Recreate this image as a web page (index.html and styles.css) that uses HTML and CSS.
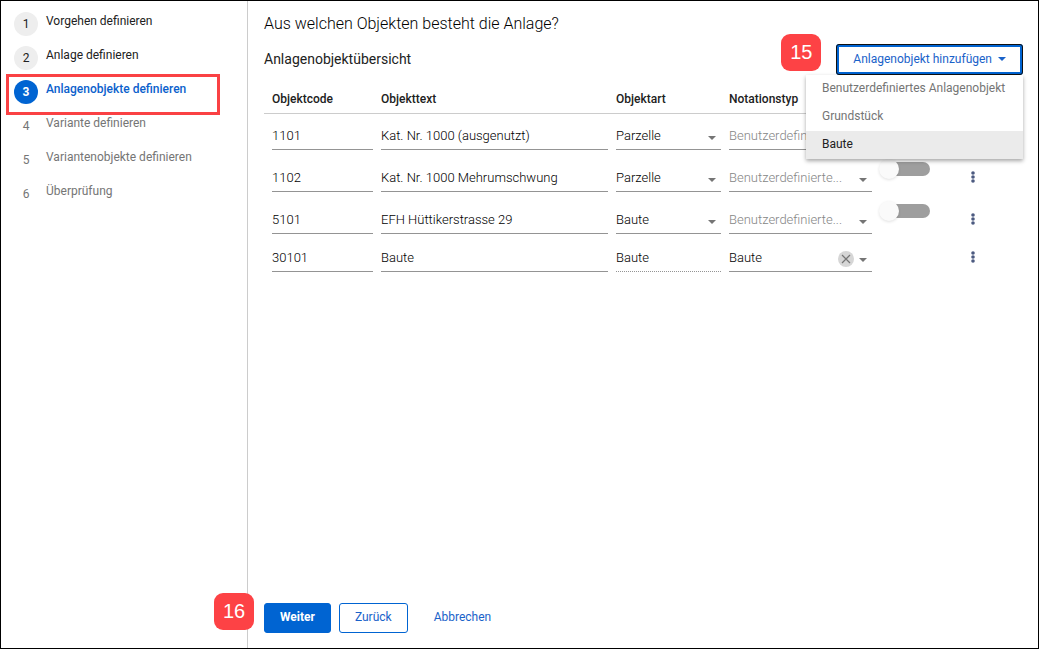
FILE: index.html
```html
<!DOCTYPE html>
<html lang="de">
<head>
<meta charset="utf-8">
<meta name="viewport" content="width=device-width, initial-scale=1">
<title>Anlagenobjekte definieren</title>
<link rel="stylesheet" href="styles.css">
</head>
<body>
<svg class="symbols" aria-hidden="true">
  <symbol id="caret" viewBox="0 0 8 4"><path d="M0 0h8L4 4z"/></symbol>
  <symbol id="dots" viewBox="0 0 4 12"><circle cx="2" cy="2" r="1.8"/><circle cx="2" cy="6" r="1.8"/><circle cx="2" cy="10" r="1.8"/></symbol>
</svg>
<div class="app">
  <nav class="sidebar" aria-label="Schritte">
    <ol class="steps">
      <li class="step step-done"><span class="step-number">1</span><span class="step-label">Vorgehen definieren</span></li>
      <li class="step step-done"><span class="step-number">2</span><span class="step-label">Anlage definieren</span></li>
      <li class="step step-active" aria-current="step"><span class="step-number">3</span><span class="step-label">Anlagenobjekte definieren</span></li>
      <li class="step"><span class="step-number">4</span><span class="step-label">Variante definieren</span></li>
      <li class="step"><span class="step-number">5</span><span class="step-label">Variantenobjekte definieren</span></li>
      <li class="step"><span class="step-number">6</span><span class="step-label">Überprüfung</span></li>
    </ol>
  </nav>
  <main class="content">
    <h1 class="title">Aus welchen Objekten besteht die Anlage?</h1>
    <div class="toolbar">
      <h2 class="subtitle">Anlagenobjektübersicht</h2>
      <div class="add">
        <span class="marker marker-add">15</span>
        <button class="button button-add" type="button" aria-expanded="true">Anlagenobjekt hinzufügen<svg class="caret"><use href="#caret"/></svg></button>
        <div class="menu" role="menu">
          <button class="menu-item" type="button" role="menuitem">Benutzerdefiniertes Anlagenobjekt</button>
          <button class="menu-item" type="button" role="menuitem">Grundstück</button>
          <button class="menu-item menu-item-active" type="button" role="menuitem">Baute</button>
        </div>
      </div>
    </div>
    <table class="objects">
      <colgroup><col class="col-code"><col><col class="col-kind"><col class="col-type"><col class="col-switch"><col class="col-actions"></colgroup>
      <thead>
        <tr><th>Objektcode</th><th>Objekttext</th><th>Objektart</th><th>Notationstyp</th><th></th><th></th></tr>
      </thead>
      <tbody>
        <tr>
          <td><input class="field" aria-label="Objektcode" value="1101"></td>
          <td><input class="field" aria-label="Objekttext" value="Kat. Nr. 1000 (ausgenutzt)"></td>
          <td><div class="picker"><select class="field" aria-label="Objektart"><option>Parzelle</option></select><svg class="caret"><use href="#caret"/></svg></div></td>
          <td><div class="picker"><select class="field field-empty" aria-label="Notationstyp"><option>Benutzerdefinierte...</option></select><svg class="caret"><use href="#caret"/></svg></div></td>
          <td></td>
          <td></td>
        </tr>
        <tr>
          <td><input class="field" aria-label="Objektcode" value="1102"></td>
          <td><input class="field" aria-label="Objekttext" value="Kat. Nr. 1000 Mehrumschwung"></td>
          <td><div class="picker"><select class="field" aria-label="Objektart"><option>Parzelle</option></select><svg class="caret"><use href="#caret"/></svg></div></td>
          <td><div class="picker"><select class="field field-empty" aria-label="Notationstyp"><option>Benutzerdefinierte...</option></select><svg class="caret"><use href="#caret"/></svg></div></td>
          <td class="switch-cell"><input class="switch" type="checkbox" role="switch" aria-label="Objekt aktiv"></td>
          <td><button class="more" type="button" aria-label="Weitere Aktionen"><svg class="dots"><use href="#dots"/></svg></button></td>
        </tr>
        <tr>
          <td><input class="field" aria-label="Objektcode" value="5101"></td>
          <td><input class="field" aria-label="Objekttext" value="EFH Hüttikerstrasse 29"></td>
          <td><div class="picker"><select class="field" aria-label="Objektart"><option>Baute</option></select><svg class="caret"><use href="#caret"/></svg></div></td>
          <td><div class="picker"><select class="field field-empty" aria-label="Notationstyp"><option>Benutzerdefinierte...</option></select><svg class="caret"><use href="#caret"/></svg></div></td>
          <td class="switch-cell"><input class="switch" type="checkbox" role="switch" aria-label="Objekt aktiv"></td>
          <td><button class="more" type="button" aria-label="Weitere Aktionen"><svg class="dots"><use href="#dots"/></svg></button></td>
        </tr>
        <tr class="row-new">
          <td><input class="field" aria-label="Objektcode" value="30101"></td>
          <td><input class="field" aria-label="Objekttext" value="Baute"></td>
          <td><input class="field field-locked" aria-label="Objektart" value="Baute" readonly></td>
          <td><div class="picker"><select class="field" aria-label="Notationstyp"><option>Baute</option></select><button class="clear" type="button" aria-label="Auswahl löschen"><svg class="cross" viewBox="0 0 10 10"><path d="M1 1l8 8M9 1l-8 8"/></svg></button><svg class="caret"><use href="#caret"/></svg></div></td>
          <td></td>
          <td><button class="more" type="button" aria-label="Weitere Aktionen"><svg class="dots"><use href="#dots"/></svg></button></td>
        </tr>
      </tbody>
    </table>
    <footer class="actions">
      <span class="marker marker-next">16</span>
      <button class="button button-primary" type="button">Weiter</button>
      <button class="button" type="button">Zurück</button>
      <button class="button button-link" type="button">Abbrechen</button>
    </footer>
  </main>
</div>
</body>
</html>
```
FILE: styles.css
```css
* { box-sizing: border-box; }

body {
  margin: 0;
  background: #fff;
  color: #212121;
  font: 12px/16px Roboto, "Liberation Sans", sans-serif;
}

button, input, select { font: inherit; color: inherit; margin: 0; }
button { cursor: pointer; }

.symbols { position: absolute; width: 0; height: 0; }

.app {
  display: flex;
  min-height: 100vh;
  border: 1px solid #000;
}

/* Step list */
.sidebar {
  flex: none;
  width: 247px;
  padding-top: 11px;
  border-right: 1px solid #ccc;
}

.steps { margin: 0; padding: 0; list-style: none; }

.step {
  position: relative;
  display: flex;
  gap: 8px;
  height: 34px;
  padding-left: 13px;
  color: #757575;
}

.step-number {
  width: 24px;
  height: 24px;
  border-radius: 50%;
  line-height: 24px;
  text-align: center;
}

.step-label { line-height: 18px; }
.step-done { color: #212121; }
.step-done .step-number { background: #eee; }
.step-active { color: #0b61cc; font-weight: 500; }
.step-active .step-number { background: #0064d2; color: #fff; font-weight: 700; }

.step-active::after {
  content: "";
  position: absolute;
  inset: -6px 27px -1px 5px;
  border: 3px solid #fa4144;
}

/* Main area */
.content {
  flex: 1;
  min-width: 0;
  display: flex;
  flex-direction: column;
  padding: 12px 15px 15px 16px;
}

.title { margin: 0; font-size: 16px; line-height: 22px; font-weight: 300; color: #000; }
.subtitle { margin: 0; padding-bottom: 2px; font-size: 14px; line-height: 20px; font-weight: 400; }

.toolbar {
  display: flex;
  align-items: center;
  justify-content: space-between;
  margin-top: 9px;
}

.add { position: relative; }

.button {
  height: 30px;
  padding: 0 15px 2px;
  border: 1px solid #0064d2;
  border-radius: 3px;
  background: #fff;
  color: #1a62c9;
}

.button-primary { background: #0064d2; color: #fff; font-weight: 700; }
.button-link { padding: 0 17px 2px; border-color: transparent; background: none; }

.button-add {
  display: flex;
  align-items: center;
  gap: 6px;
  height: 31px;
  padding: 0 14px 2px;
  border: 3px solid #0064d2;
  outline: 1px solid #101010;
  outline-offset: -1px;
}

.caret { width: 8px; height: 4px; fill: currentColor; }

.menu {
  position: absolute;
  z-index: 2;
  top: 100%;
  right: 0;
  width: 217px;
  background: #fff;
  box-shadow: 0 2px 4px rgba(0, 0, 0, .35);
}

.menu-item {
  display: block;
  width: 100%;
  height: 28px;
  padding: 0 16px 2px;
  border: 0;
  background: none;
  color: #757575;
  text-align: left;
  white-space: nowrap;
}

.menu-item-active { background: #ebebeb; color: #212121; }

/* Numbered callouts */
.marker {
  position: absolute;
  width: 40px;
  height: 37px;
  border-radius: 9px;
  background: #fd4245;
  color: #fff;
  font: 20px/37px "Liberation Sans", sans-serif;
  text-align: center;
}

.marker-add { top: -10px; right: calc(100% + 15px); }
.marker-next { top: -10px; left: -50px; }

/* Object table */
.objects {
  width: 100%;
  margin-top: 9px;
  border-collapse: separate;
  border-spacing: 0;
  table-layout: fixed;
}

.col-code { width: 109px; }
.col-kind { width: 113px; }
.col-type { width: 151px; }
.col-switch { width: 85px; }
.col-actions { width: 66px; }

.objects th {
  height: 30px;
  padding: 0 0 0 8px;
  border-bottom: 1px solid #ccc;
  font-weight: 500;
  text-align: left;
}

.objects td { padding: 8px 0 6px 8px; vertical-align: top; }
.objects .row-new td { padding-top: 4px; }
.objects .switch-cell { padding-top: 3px; padding-bottom: 0; }

.field {
  display: block;
  width: 100%;
  height: 28px;
  padding: 0;
  border: 0;
  border-bottom: 1px solid #949494;
  border-radius: 0;
  background: none;
  color: #000;
  font-size: 13px;
  font-weight: 300;
  outline: 0;
  appearance: none;
}

.field-empty { color: #858585; }
.field-locked { border-bottom-style: dotted; }

.picker { position: relative; }
.picker .caret {
  position: absolute;
  right: 5px;
  top: 14px;
  fill: #757575;
  pointer-events: none;
}

.clear {
  position: absolute;
  right: 18px;
  top: 7px;
  display: grid;
  place-items: center;
  width: 16px;
  height: 16px;
  padding: 0;
  border: 0;
  border-radius: 50%;
  background: #d6d6d6;
}

.cross { width: 10px; height: 10px; fill: none; stroke: #757575; stroke-width: 1.2; }

.switch {
  display: block;
  position: relative;
  width: 50px;
  height: 14px;
  margin: 3px 0;
  appearance: none;
  border-radius: 7px;
  background: linear-gradient(#9e9e9e, #9e9e9e) right center / 40px 14px no-repeat;
}

.switch::before {
  content: "";
  position: absolute;
  left: -1px;
  top: -3px;
  width: 20px;
  height: 20px;
  border-radius: 50%;
  background: #fafafa;
  box-shadow: 0 1px 3px rgba(0, 0, 0, .12);
}

.more {
  display: grid;
  place-items: center;
  width: 16px;
  height: 26px;
  padding: 0;
  border: 0;
  background: none;
}

.dots { width: 4px; height: 12px; fill: #4c5a80; }

.actions {
  position: relative;
  display: flex;
  gap: 8px;
  margin-top: auto;
}
```
